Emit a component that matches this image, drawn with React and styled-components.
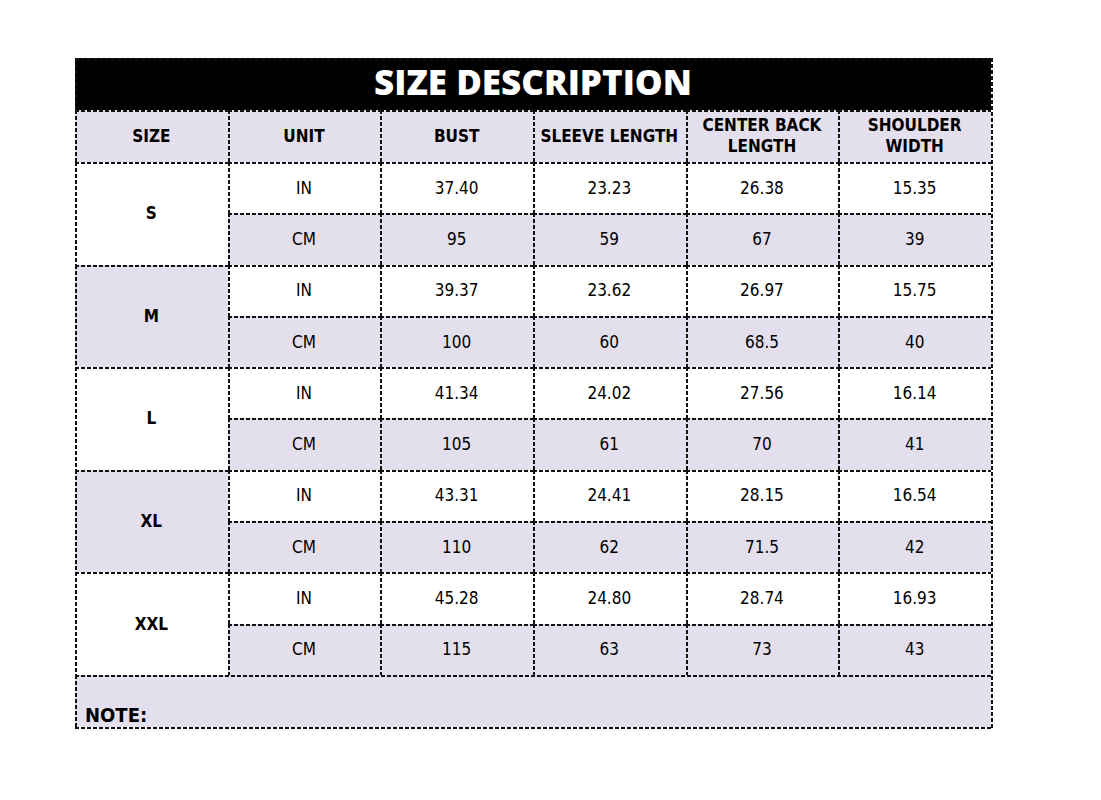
import React from 'react'
import styled, { createGlobalStyle, css } from 'styled-components'

const GlobalStyle = createGlobalStyle`
    html, body {
        margin: 0;
        background: #fff;
    }
    body {
        font-family: "DejaVu Sans Condensed", "DejaVu Sans", Verdana, sans-serif;
        color: #000;
    }
`

const rows = [
    { size: 'S', inch: ['37.40', '23.23', '26.38', '15.35'], cm: ['95', '59', '67', '39'] },
    { size: 'M', inch: ['39.37', '23.62', '26.97', '15.75'], cm: ['100', '60', '68.5', '40'] },
    { size: 'L', inch: ['41.34', '24.02', '27.56', '16.14'], cm: ['105', '61', '70', '41'] },
    { size: 'XL', inch: ['43.31', '24.41', '28.15', '16.54'], cm: ['110', '62', '71.5', '42'] },
    { size: 'XXL', inch: ['45.28', '24.80', '28.74', '16.93'], cm: ['115', '63', '73', '43'] },
]

const headers = ['SIZE', 'UNIT', 'BUST', 'SLEEVE LENGTH', 'CENTER BACK LENGTH', 'SHOULDER WIDTH']

function App() {
    return (
        <Page>
            <GlobalStyle />
            <Frame>
                <Chart>
                    <thead>
                        <tr>
                            <Title colSpan={6}>SIZE DESCRIPTION</Title>
                        </tr>
                        <tr>
                            {headers.map(h => (
                                <Head key={h} $narrow={h.length > 14}>{h}</Head>
                            ))}
                        </tr>
                    </thead>
                    <tbody>
                        {rows.map((r, i) => (
                            <React.Fragment key={r.size}>
                                <tr>
                                    <SizeCell rowSpan={2} $shaded={i % 2 === 1}>{r.size}</SizeCell>
                                    <Cell>IN</Cell>
                                    {r.inch.map((v, k) => <Cell key={k}>{v}</Cell>)}
                                </tr>
                                <tr>
                                    <Cell $shaded>CM</Cell>
                                    {r.cm.map((v, k) => <Cell key={k} $shaded>{v}</Cell>)}
                                </tr>
                            </React.Fragment>
                        ))}
                        <tr>
                            <Note colSpan={6}>NOTE:</Note>
                        </tr>
                    </tbody>
                </Chart>
            </Frame>
        </Page>
    )
}

// dashed lines drawn as gradients: 4px dash, 2px gap, 2px thick
const hDash = 'repeating-linear-gradient(90deg, #111 0 4px, transparent 4px 6px)'
const vDash = 'repeating-linear-gradient(180deg, #111 0 4px, transparent 4px 6px)'

const edges = css`
    background-image: ${hDash}, ${vDash};
    background-size: 100% 2px, 2px 100%;
    background-position: left top, left top;
    background-repeat: no-repeat;
`

const Page = styled.div`
    padding: 58px 0 0 75px;
`

const Frame = styled.div`
    display: inline-block;
    padding: 0 2px 2px 0;
    background-image: ${hDash}, ${vDash};
    background-size: 100% 2px, 2px 100%;
    background-position: left bottom, right top;
    background-repeat: no-repeat;
`

const Chart = styled.table`
    border-collapse: collapse;
    table-layout: fixed;
    width: 916px;
    td, th {
        border: none;
        text-align: center;
        vertical-align: middle;
        padding: 0;
        box-sizing: border-box;
    }
`

const Title = styled.th`
    height: 52px;
    background-color: #000;
    ${edges}
    color: #fff;
    font-family: "Open Sans", "DejaVu Sans", sans-serif;
    font-weight: 800;
    font-size: 35px;
    padding-bottom: 5px !important;
`

const Head = styled.th`
    height: 52px;
    background-color: #e4dfec;
    ${edges}
    font-size: 17px;
    font-weight: bold;
    line-height: 21px;
    padding: 0 ${p => (p.$narrow ? '14px' : '0')} !important;
`

const Cell = styled.td`
    height: 51.3px;
    font-size: 17px;
    background-color: ${p => (p.$shaded ? '#e4dfec' : '#fff')};
    ${edges}
`

const SizeCell = styled(Cell)`
    font-weight: bold;
`

const Note = styled.td`
    height: 52px;
    background-color: #e4dfec;
    ${edges}
    font-size: 20px;
    font-weight: bold;
    text-align: left !important;
    vertical-align: bottom !important;
    padding: 0 0 0 10px !important;
`

export default App
